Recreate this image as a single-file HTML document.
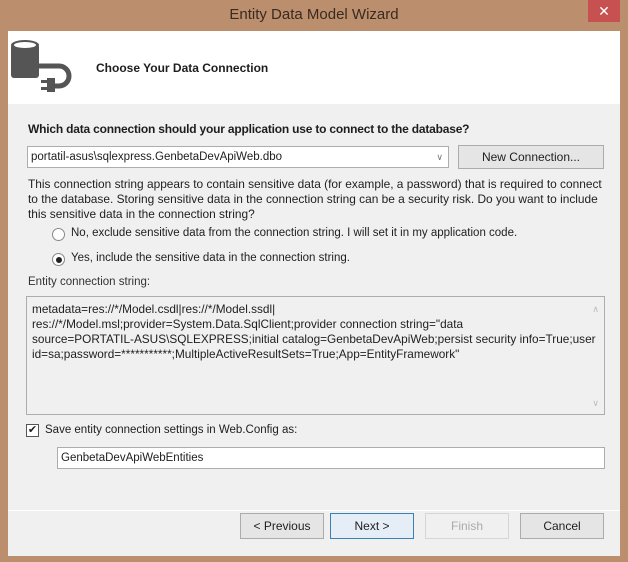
<!DOCTYPE html>
<html><head><style>
*{margin:0;padding:0;box-sizing:border-box}
body{width:628px;height:562px;background:#bb8e6e;font-family:"Liberation Sans",sans-serif;font-size:11.5px;color:#1e1e1e;position:relative;overflow:hidden}
.a{position:absolute;white-space:nowrap}
.title{left:0;top:0;width:628px;height:31px;text-align:center;line-height:30px;font-size:15px;color:#3a2a20}
.close{left:588px;top:0;width:32px;height:22px;background:#c75050;color:#fff;text-align:center;line-height:22px;font-size:14px}
.client{left:8px;top:31px;width:612px;height:525px;background:#f0f0f0}
.head{left:8px;top:31px;width:612px;height:73px;background:#fff}
.box{background:#fff;border:1px solid #abadb3}
.btn{background:#e5e5e5;border:1px solid #acacac;text-align:center;line-height:23px;font-size:12px}
</style></head><body>
<div class="a title">Entity Data Model Wizard</div>
<div class="a close">✕</div>
<div class="a client"></div>
<div class="a head"></div>
<svg class="a" style="left:9px;top:36px" width="64" height="70" viewBox="0 0 64 70">
<rect x="2" y="8" width="28" height="34" rx="3" fill="#555"/>
<ellipse cx="16" cy="9" rx="14" ry="5" fill="#555"/>
<ellipse cx="16" cy="9" rx="11" ry="3" fill="#fff"/>
<path d="M30 30 H50 A10 10 0 0 1 50 50 H44" stroke="#555" stroke-width="5" fill="none"/>
<rect x="38" y="42" width="8" height="14" fill="#555"/>
<rect x="32" y="44" width="6" height="3" fill="#555"/><rect x="32" y="51" width="6" height="3" fill="#555"/>
</svg>
<div class="a" style="left:96px;top:61px;font-weight:bold;font-size:12px">Choose Your Data Connection</div>
<div class="a" style="left:28px;top:122px;font-weight:bold;font-size:12px;letter-spacing:-0.2px">Which data connection should your application use to connect to the database?</div>
<div class="a box" style="left:27px;top:146px;width:422px;height:22px;line-height:20px;padding-left:3px">portatil-asus\sqlexpress.GenbetaDevApiWeb.dbo<span style="position:absolute;right:5px;color:#777;font-size:9px">∨</span></div>
<div class="a btn" style="left:458px;top:145px;width:146px;height:24px">New Connection...</div>
<div class="a" style="left:28px;top:177px;line-height:15px;font-size:11.9px">This connection string appears to contain sensitive data (for example, a password) that is required to connect<br>to the database. Storing sensitive data in the connection string can be a security risk. Do you want to include<br>this sensitive data in the connection string?</div>
<div class="a" style="left:52px;top:228px;width:13px;height:13px;border:1px solid #888;border-radius:50%;background:#fff"></div>
<div class="a" style="left:71px;top:227px">No, exclude sensitive data from the connection string. I will set it in my application code.</div>
<div class="a" style="left:52px;top:253px;width:13px;height:13px;border:1px solid #888;border-radius:50%;background:#fff"><div style="margin:2.5px;width:6px;height:6px;border-radius:50%;background:#222"></div></div>
<div class="a" style="left:71px;top:252px">Yes, include the sensitive data in the connection string.</div>
<div class="a" style="left:28px;top:276px;color:#333">Entity connection string:</div>
<div class="a" style="left:26px;top:296px;width:579px;height:119px;border:1px solid #abadb3;background:#f0f0f0;padding:5px 24px 0 5px;line-height:15px;font-size:11.8px">metadata=res://*/Model.csdl|res://*/Model.ssdl|<br>res://*/Model.msl;provider=System.Data.SqlClient;provider connection string="data<br>source=PORTATIL-ASUS\SQLEXPRESS;initial catalog=GenbetaDevApiWeb;persist security info=True;user<br>id=sa;password=***********;MultipleActiveResultSets=True;App=EntityFramework"<span style="position:absolute;right:5px;top:5px;color:#bbb;font-size:9px">∧</span><span style="position:absolute;right:5px;bottom:3px;color:#bbb;font-size:9px">∨</span></div>
<div class="a" style="left:26px;top:424px;width:13px;height:13px;border:1px solid #555;background:#fff;font-size:11px;line-height:11px;text-align:center">✔</div>
<div class="a" style="left:45px;top:424px">Save entity connection settings in Web.Config as:</div>
<div class="a box" style="left:57px;top:447px;width:548px;height:22px;line-height:20px;padding-left:3px">GenbetaDevApiWebEntities</div>
<div class="a" style="left:8px;top:510px;width:612px;height:1px;background:#fff"></div>
<div class="a btn" style="left:240px;top:513px;width:84px;height:26px;line-height:24px">&lt; Previous</div>
<div class="a btn" style="left:330px;top:513px;width:84px;height:26px;line-height:24px;border-color:#3c7fb1;background:#e5eef6">Next &gt;</div>
<div class="a btn" style="left:425px;top:513px;width:84px;height:26px;line-height:24px;color:#aaa;background:#f0f0f0;border-color:#d5d5d5">Finish</div>
<div class="a btn" style="left:520px;top:513px;width:84px;height:26px;line-height:24px">Cancel</div>
</body></html>
